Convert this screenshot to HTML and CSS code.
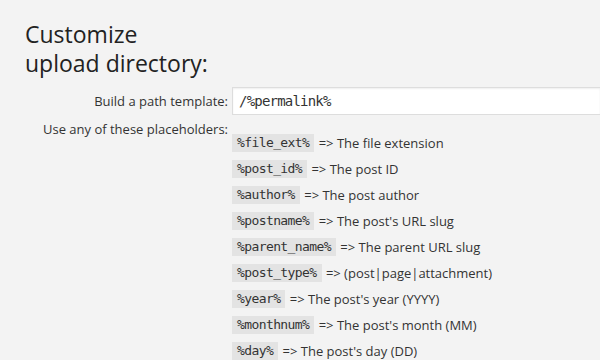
FILE: index.html
```html
<!DOCTYPE html>
<html>
<head>
<meta charset="utf-8">
<link rel="stylesheet" href="styles.css">
</head>
<body>
<div class="wrap">
  <h2 class="title">Customize<br>upload directory:</h2>
  <div class="form">
    <div class="row">
      <label class="th" for="tpl">Build a path template:</label>
      <div class="td"><input id="tpl" class="input" type="text" value="/%permalink%"></div>
    </div>
    <div class="row">
      <div class="th th-list">Use any of these placeholders:</div>
      <ul class="td list">
        <li><code>%file_ext%</code> =&gt; The file extension</li>
        <li><code>%post_id%</code> =&gt; The post ID</li>
        <li><code>%author%</code> =&gt; The post author</li>
        <li><code>%postname%</code> =&gt; The post's URL slug</li>
        <li><code>%parent_name%</code> =&gt; The parent URL slug</li>
        <li><code>%post_type%</code> =&gt; (post|page|attachment)</li>
        <li><code>%year%</code> =&gt; The post's year (YYYY)</li>
        <li><code>%monthnum%</code> =&gt; The post's month (MM)</li>
        <li><code>%day%</code> =&gt; The post's day (DD)</li>
      </ul>
    </div>
  </div>
</div>
</body>
</html>
```
FILE: styles.css
```css
html, body {
  margin: 0;
  padding: 0;
  background: #f3f3f3;
  font-family: "Open Sans", sans-serif;
  color: #333;
  overflow: hidden;
}
.wrap {
  padding: 20px 0 0 25px;
}
.title {
  margin: 0;
  font-size: 23px;
  line-height: 29px;
  font-weight: 400;
  color: #222;
}
.form {
  margin-top: 9px;
}
.row {
  display: grid;
  grid-template-columns: 203px 1fr;
  column-gap: 4px;
}
.th {
  text-align: right;
  font-size: 13px;
  line-height: 28px;
  color: #333;
}
.input {
  box-sizing: border-box;
  display: block;
  width: 100%;
  height: 28px;
  margin: 0;
  padding: 0 6px;
  border: 1px solid #ddd;
  border-right: 0;
  box-shadow: inset 0 1px 2px rgba(0,0,0,.07);
  background: #fff;
  font-family: "DejaVu Sans Mono", monospace;
  font-size: 14px;
  letter-spacing: -0.8px;
  color: #333;
  outline: none;
}
.th-list {
  line-height: 20px;
  padding-top: 4px;
}
.list {
  list-style: none;
  margin: 0;
  padding: 19px 0 0 0;
  font-size: 13px;
  color: #333;
}
.list li {
  height: 18px;
  line-height: 18px;
  margin-bottom: 8px;
  white-space: nowrap;
}
code {
  display: inline-block;
  height: 18px;
  line-height: 18px;
  padding: 0 5px 0 5px;
  margin-right: 1px;
  background: #e3e3e3;
  font-family: "DejaVu Sans Mono", monospace;
  font-size: 13px;
  letter-spacing: -0.6px;
  color: #333;
  vertical-align: top;
}
```
